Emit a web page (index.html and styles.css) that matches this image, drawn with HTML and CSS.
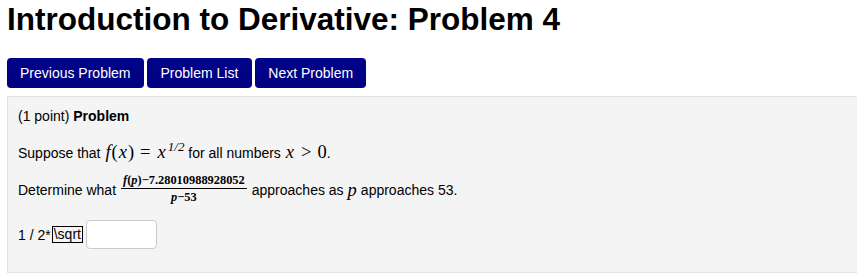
FILE: index.html
```html
<!DOCTYPE html>
<html>
<head>
<meta charset="utf-8">
<link rel="stylesheet" href="styles.css">
</head>
<body>
<h1 class="title">Introduction to Derivative: Problem 4</h1>
<div class="nav">
  <a class="btn" href="#">Previous Problem</a>
  <a class="btn btn-wide" href="#">Problem List</a>
  <a class="btn" href="#">Next Problem</a>
</div>
<div class="panel">
  <p class="line head">(1 point) <b>Problem</b></p>
  <p class="line sup-line">Suppose that <span class="m"><i>f</i>(<i>x</i>)<span class="op">=</span><i>x</i><sup class="sup">1/2</sup></span> for all numbers <span class="m"><i>x</i><span class="op">&gt;</span>0</span>.</p>
  <p class="line det">Determine what <span class="frac"><span class="num"><i>f</i>(<i>p</i>)−7.28010988928052</span><span class="den"><i>p</i>−53</span></span> approaches as <span class="m"><i>p</i></span> approaches 53.</p>
  <div class="answer">
    <span class="lbl">1 / 2*</span><span class="sqrt">\sqrt</span><input class="inp" type="text">
  </div>
</div>
</body>
</html>
```
FILE: styles.css
```css
html {
  overflow: hidden;
}
html, body {
  margin: 0;
  padding: 0;
  background: #fff;
}
body {
  padding: 0 0 0 7px;
  font-family: "Liberation Sans", Arial, sans-serif;
  color: #000;
}
.title {
  font-size: 31.5px;
  font-weight: bold;
  margin: 0;
  padding-top: 2px;
  line-height: 34px;
  height: 56px;
  white-space: nowrap;
}
.nav {
  display: flex;
  gap: 3px;
}
.btn {
  display: block;
  height: 30px;
  line-height: 30px;
  padding: 0 13px;
  border-radius: 4px;
  background: linear-gradient(#00048a, #000080);
  color: #fff;
  text-decoration: none;
  font-size: 14px;
  box-sizing: border-box;
}
.btn-wide {
  padding: 0 14px;
}
.panel {
  margin-top: 8px;
  margin-right: -20px;
  background: #f4f4f4;
  border: 1px solid #e2e2e2;
  height: 177px;
  box-sizing: border-box;
  padding: 9px 10px 0 10px;
  font-size: 14px;
}
.line {
  margin: 0;
  line-height: 20px;
}
.head {
  margin-bottom: 16px;
}
.m {
  font-family: "Liberation Serif", "Times New Roman", serif;
  font-size: 18.5px;
}
.m i {
  font-style: italic;
  padding: 0 1px;
}
.op {
  padding: 0 6px;
}
.sup {
  font-size: 13px;
  vertical-align: 7px;
  line-height: 0;
  font-style: italic;
  padding-left: 1px;
}
.det {
  margin-top: 11px;
  display: flex;
  align-items: center;
  gap: 3px;
}
.frac {
  display: inline-flex;
  flex-direction: column;
  align-items: center;
  font-family: "Liberation Serif", "Times New Roman", serif;
  font-weight: bold;
  font-size: 12.4px;
  margin: 0 2px;
}
.num {
  border-bottom: 1px solid #000;
  padding: 0 2px 1px;
  line-height: 13px;
}
.den {
  line-height: 15px;
  padding-top: 1px;
}
.answer {
  margin-top: 15px;
  display: flex;
  align-items: center;
  font-size: 14px;
}
.sqrt {
  border: 1px solid #000;
  padding: 0 1px;
  margin-left: 1px;
  line-height: 15px;
}
.inp {
  margin-left: 3px;
  width: 71px;
  height: 29px;
  box-sizing: border-box;
  border: 1px solid #ccc;
  border-radius: 4px;
  background: #fff;
}
```
